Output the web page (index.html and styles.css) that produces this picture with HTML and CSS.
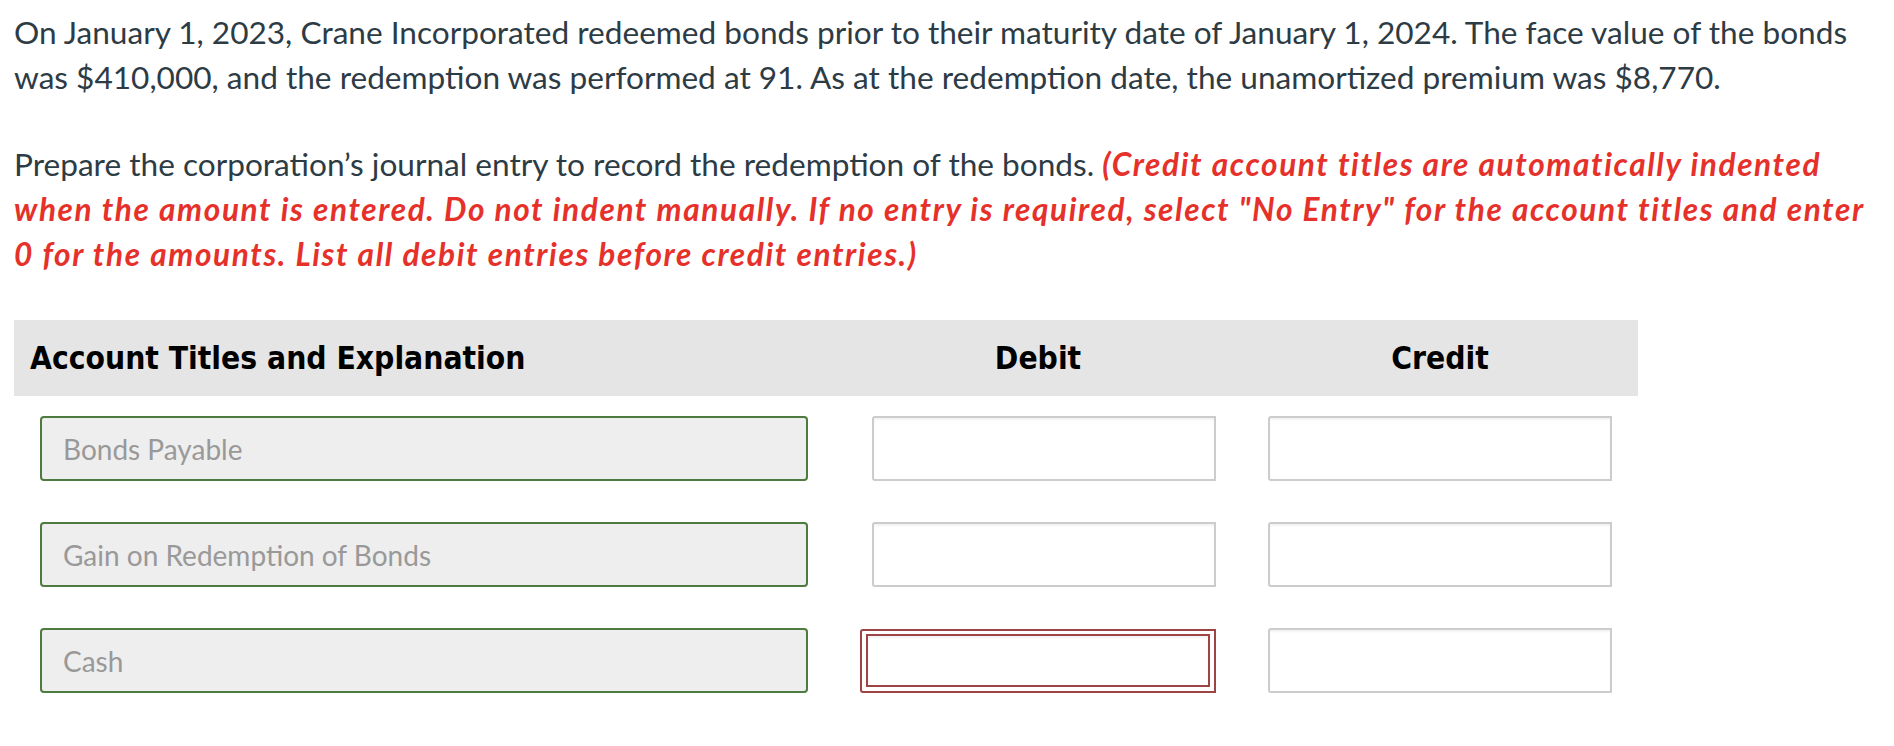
FILE: index.html
```html
<!DOCTYPE html>
<html lang="en">
<head>
    <meta charset="UTF-8">
    <meta name="viewport" content="width=device-width, initial-scale=1.0">
    <title>Journal Entry</title>
    <link rel="stylesheet" href="styles.css">
</head>
<body>
    <div class="question">
        <p class="question-text">On January 1, 2023, Crane Incorporated redeemed bonds prior to their maturity date of January 1, 2024. The face value of the bonds was $410,000, and the redemption was performed at 91. As at the redemption date, the unamortized premium was $8,770.</p>
        <p class="question-text prompt">Prepare the corporation’s journal entry to record the redemption of the bonds. <em class="note">(Credit account titles are automatically indented when the amount is entered. Do not indent manually. If no entry is required, select "No Entry" for the account titles and enter 0 for the amounts. List all debit entries before credit entries.)</em></p>

        <div class="journal">
            <div class="journal-head">
                <div class="col-title">Account Titles and Explanation</div>
                <div class="col-amount debit">Debit</div>
                <div class="col-amount">Credit</div>
            </div>
            <div class="journal-body">
                <div class="journal-row">
                    <div class="cell-title"><input class="account" type="text" value="Bonds Payable" readonly></div>
                    <div class="cell-amount"><input class="amount" type="text"></div>
                    <div class="cell-amount"><input class="amount" type="text"></div>
                </div>
                <div class="journal-row">
                    <div class="cell-title"><input class="account" type="text" value="Gain on Redemption of Bonds" readonly></div>
                    <div class="cell-amount"><input class="amount" type="text"></div>
                    <div class="cell-amount"><input class="amount" type="text"></div>
                </div>
                <div class="journal-row">
                    <div class="cell-title"><input class="account" type="text" value="Cash" readonly></div>
                    <div class="cell-amount">
                        <div class="incorrect"><input class="amount" type="text"></div>
                    </div>
                    <div class="cell-amount"><input class="amount" type="text"></div>
                </div>
            </div>
        </div>
    </div>
</body>
</html>
```

FILE: styles.css
```css
* {
    margin: 0;
    padding: 0;
    box-sizing: border-box;
}

body {
    font-family: Lato, "Open Sans", sans-serif;
    background: #fff;
    color: #2d3b45;
}

.question {
    padding: 10px 6px 10px 14px;
}

.question-text {
    font-size: 31.6px;
    line-height: 45px;
}

.prompt {
    margin-top: 42px;
}

.note {
    color: #e5312a;
    font-weight: 700;
    font-style: italic;
    letter-spacing: 1.6px;
}

/* journal table */
.journal {
    margin-top: 43px;
    width: 1624px;
}

.journal-head,
.journal-row {
    display: grid;
    grid-template-columns: 832px 396px 396px;
    align-items: center;
}

.journal-head {
    height: 76px;
    background-color: #e5e5e5;
    font-family: "DejaVu Sans Condensed", "DejaVu Sans", sans-serif;
    font-stretch: condensed;
    font-weight: bold;
    font-size: 31.5px;
    color: #000;
}

.col-title {
    padding-left: 16px;
}

.col-amount {
    text-align: center;
}

.debit {
    padding-right: 12px;
}

.journal-body {
    padding-top: 20px;
    display: flex;
    flex-direction: column;
    gap: 41px;
}

.cell-title {
    padding-left: 26px;
}

.cell-amount {
    padding-left: 26px;
}

.account {
    display: block;
    width: 768px;
    height: 65px;
    padding: 0 21px;
    border: 2px solid #4d7a3e;
    border-radius: 4px;
    background-color: #eeeeee;
    font-family: Lato, sans-serif;
    font-size: 28px;
    color: #999;
    outline: none;
}

.amount {
    display: block;
    width: 344px;
    height: 65px;
    border: 2px solid #cccccc;
    border-radius: 3px 0 0 3px;
    background-color: #fff;
    box-shadow: inset 0 2px 2px rgba(0, 0, 0, 0.05);
    font-family: Lato, sans-serif;
    font-size: 28px;
    outline: none;
}

.incorrect {
    width: 356px;
    height: 64px;
    margin-left: -12px;
    padding: 3px 4px 4px 4px;
    border: 2px solid #9e4444;
    border-radius: 3px 0 0 3px;
}

.incorrect .amount {
    width: 344px;
    height: 53px;
    border-color: #9e4444;
    border-radius: 0;
}
```
